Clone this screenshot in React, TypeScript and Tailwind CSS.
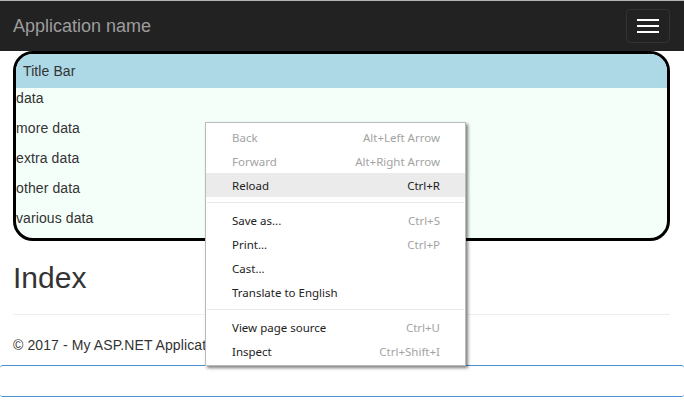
const rows = ['data', 'more data', 'extra data', 'other data', 'various data'];

type Item = { label: string; keys?: string; disabled?: boolean; active?: boolean };

const groups: Item[][] = [
  [
    { label: 'Back', keys: 'Alt+Left Arrow', disabled: true },
    { label: 'Forward', keys: 'Alt+Right Arrow', disabled: true },
    { label: 'Reload', keys: 'Ctrl+R', active: true },
  ],
  [
    { label: 'Save as...', keys: 'Ctrl+S' },
    { label: 'Print...', keys: 'Ctrl+P' },
    { label: 'Cast...' },
    { label: 'Translate to English' },
  ],
  [
    { label: 'View page source', keys: 'Ctrl+U' },
    { label: 'Inspect', keys: 'Ctrl+Shift+I' },
  ],
];

function ContextMenu() {
  return (
    <div className="absolute left-[205px] top-[122px] w-[261px] h-[244px] border border-[#bababa] bg-white pt-[2px] font-['Noto_Sans',sans-serif] text-[11.5px] shadow-[2px_2px_3px_rgba(0,0,0,0.5)]">
      {groups.map((group, i) => (
        <div key={i}>
          {i > 0 && <div className="mx-[1px] mb-[5px] mt-[5px] h-px bg-[#e9e9e9]" />}
          {group.map((item) => (
            <div
              key={item.label}
              className={
                'flex h-6 items-center justify-between pl-[26px] pr-[25px] pt-px ' +
                (item.active ? 'bg-[#ebebeb] ' : '') +
                (item.disabled ? 'text-[#a3a3a3]' : 'text-[#222222]')
              }
            >
              <span>{item.label}</span>
              {item.keys && <span className={item.active ? 'text-[#222222]' : 'text-[#a3a3a3]'}>{item.keys}</span>}
            </div>
          ))}
        </div>
      ))}
    </div>
  );
}

export default function App() {
  return (
    <div className="relative h-[413px] w-[684px] overflow-hidden bg-white font-['Liberation_Sans',Arial,sans-serif] text-[14px] leading-5 text-[#333333]">
      <div className="h-px bg-[#b4b4b4]" />
      <nav className="flex h-[50px] items-center justify-between bg-[#222222] pl-[13px] pr-[14px]">
        <span className="text-[18px] text-[#9d9d9d]">Application name</span>
        <button type="button" className="flex h-[34px] w-11 flex-col items-center justify-center gap-1 rounded border border-[#333333]">
          <span className="h-0.5 w-[22px] bg-white" />
          <span className="h-0.5 w-[22px] bg-white" />
          <span className="h-0.5 w-[22px] bg-white" />
        </button>
      </nav>
      <div className="pl-[13px] pr-[14px]">
        <div className="overflow-hidden rounded-[20px] border-[3px] border-black bg-[#f5fffa] tracking-[0.1px]">
          <div className="flex h-[34px] items-center bg-[#add8e6] pl-[7px]">Title Bar</div>
          {rows.map((row) => (
            <p key={row} className="mb-[10px] h-5">{row}</p>
          ))}
        </div>
        <h2 className="mb-5 mt-5 text-[30px] leading-[33px]">Index</h2>
        <hr className="border-0 border-t border-[#eeeeee]" />
        <p className="mb-[10px] mt-5 tracking-[0.1px]">© 2017 - My ASP.NET Application</p>
      </div>
      <div className="h-[32px] w-[684px] rounded-[3px] border-t border-b border-[#4a90d0] bg-white" />
      <ContextMenu />
    </div>
  );
}
